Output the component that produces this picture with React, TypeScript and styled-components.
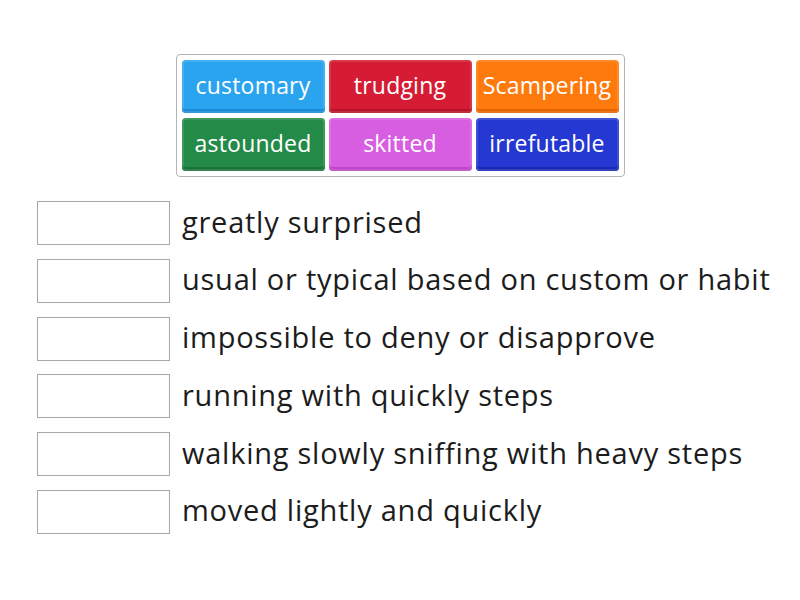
import styled, { createGlobalStyle } from 'styled-components';

const GlobalStyle = createGlobalStyle`
  html, body {
    margin: 0;
    padding: 0;
    background: #ffffff;
  }
  body {
    font-family: 'Open Sans', 'Noto Sans', sans-serif;
  }
`;

const Page = styled.div`
  width: 800px;
  height: 600px;
  display: flex;
  flex-direction: column;
  align-items: center;
`;

const Bank = styled.div`
  margin-top: 54px;
  display: grid;
  grid-template-columns: repeat(3, 143px);
  grid-auto-rows: 53px;
  gap: 5px 4px;
  padding: 5px;
  border: 1px solid #b4b4b4;
  border-radius: 4px;
`;

const Tile = styled.div<{ $bg: string; $edge: string }>`
  display: flex;
  align-items: center;
  justify-content: center;
  border-radius: 4px;
  background: ${(p) => p.$bg};
  box-shadow: inset 0 0 0 2px rgba(255, 255, 255, 0.12), inset 0 -4px 0 ${(p) => p.$edge};
  color: #ffffff;
  font-size: 23px;
  font-weight: 500;
  letter-spacing: 0.2px;
  padding-bottom: 4px;
  box-sizing: border-box;
`;

const Rows = styled.div`
  align-self: stretch;
  margin-top: 24px;
  padding-left: 37px;
  display: flex;
  flex-direction: column;
  gap: 13.8px;
`;

const Row = styled.div`
  display: flex;
  align-items: center;
  gap: 12px;
  height: 44px;
`;

const Slot = styled.div`
  width: 133px;
  height: 44px;
  border: 1px solid #a8a8a8;
  box-sizing: border-box;
  background: #ffffff;
  flex-shrink: 0;
`;

const Clue = styled.span`
  font-size: 29px;
  line-height: 44px;
  letter-spacing: 0.75px;
  color: #1c1c1c;
  margin-top: -3px;
  white-space: nowrap;
`;

const tiles = [
  { word: 'customary', bg: '#2ba4f0', edge: '#1b8ad6' },
  { word: 'trudging', bg: '#d51c34', edge: '#b81226' },
  { word: 'Scampering', bg: '#ff7a0c', edge: '#e56400' },
  { word: 'astounded', bg: '#248a47', edge: '#197236' },
  { word: 'skitted', bg: '#d75ee0', edge: '#be46c8' },
  { word: 'irrefutable', bg: '#2538d2', edge: '#1a28b4' },
];

const clues = [
  'greatly surprised',
  'usual or typical based on custom or habit',
  'impossible to deny or disapprove',
  'running with quickly steps',
  'walking slowly sniffing with heavy steps',
  'moved lightly and quickly',
];

export default function App() {
  return (
    <Page>
      <GlobalStyle />
      <Bank>
        {tiles.map((t) => (
          <Tile key={t.word} $bg={t.bg} $edge={t.edge}>
            {t.word}
          </Tile>
        ))}
      </Bank>
      <Rows>
        {clues.map((c) => (
          <Row key={c}>
            <Slot />
            <Clue>{c}</Clue>
          </Row>
        ))}
      </Rows>
    </Page>
  );
}
